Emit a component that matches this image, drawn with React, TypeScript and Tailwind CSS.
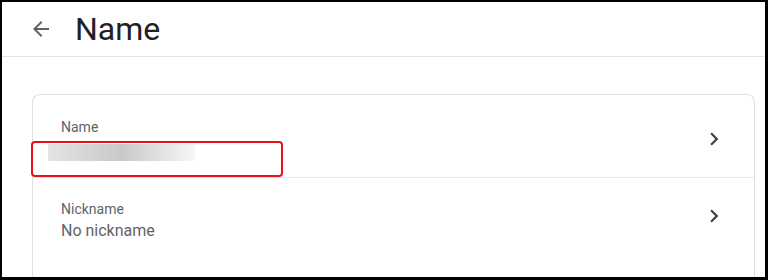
function BackArrow() {
  return (
    <svg viewBox="0 0 24 24" className="h-6 w-6 fill-[#5f6368]">
      <path d="M20 11H7.83l5.59-5.59L12 4l-8 8 8 8 1.41-1.41L7.83 13H20v-2z" />
    </svg>
  );
}

function Chevron() {
  return (
    <svg viewBox="0 0 24 24" className="h-[26px] w-[26px] fill-[#3c4043]">
      <path d="M10 6L8.59 7.41 13.17 12l-4.58 4.59L10 18l6-6z" />
    </svg>
  );
}

export default function App() {
  return (
    <div
      className="box-border h-[280px] w-[768px] overflow-hidden border-t-2 border-r-[3px] border-b-[3px] border-l-2 border-black bg-white"
      style={{ fontFamily: 'Roboto, "Noto Sans", Arial, sans-serif' }}
    >
      <header className="flex h-[55px] items-center border-b border-[#e3e3e3] pl-[27px]">
        <BackArrow />
        <h1 className="ml-[22px] text-[32px] leading-10 font-normal text-[#202124]">Name</h1>
      </header>

      <div className="pt-[37px] pr-[10px] pl-[30px]">
        <div className="rounded-t-lg border border-b-0 border-[#e0e0e0]">
          <div className="relative flex items-center border-b border-[#e8e8e8] pt-[22px] pr-[27px] pb-[16px] pl-[28px]">
            <div className="flex flex-1 flex-col">
              <span className="text-sm leading-5 text-[#5f6368]">Name</span>
              <div className="h-6">
                <div className="mt-[7px] -ml-[13px] h-[17px] w-[147px] bg-linear-to-r from-[#e4e4e4] via-[#c9c9c9] to-[#f7f7f7] blur-[0.5px]" />
              </div>
            </div>
            <Chevron />
            <div className="absolute top-[46px] left-[-2px] h-[36px] w-[252px] rounded-[4px] border-2 border-[#e8101a]" />
          </div>
          <div className="flex items-center pt-[21px] pr-[27px] pb-[40px] pl-[28px]">
            <div className="flex flex-1 flex-col">
              <span className="text-sm leading-5 text-[#5f6368]">Nickname</span>
              <span className="text-base leading-6 text-[#5f6368]">No nickname</span>
            </div>
            <div className="-mt-[10px]">
              <Chevron />
            </div>
          </div>
        </div>
      </div>
    </div>
  );
}
